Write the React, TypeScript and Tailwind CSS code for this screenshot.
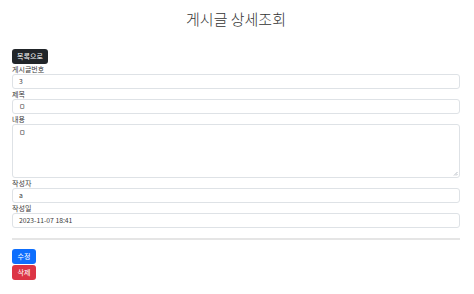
import React from 'react';

const font = { fontFamily: '"Noto Sans CJK KR", "Noto Sans", sans-serif' };

const Field: React.FC<{ label: string; value: string; area?: boolean }> = ({ label, value, area }) => (
  <div className="flex flex-col">
    <label className="h-[10px] text-[7px] leading-[10px] text-[#3a3a3a]">{label}</label>
    {area ? (
      <div className="relative h-[54px] rounded-[3px] border border-[#dee2e6] bg-white px-[6px] pt-[3px] text-[7px] leading-[9px] text-[#3a3a3a]">
        {value}
        <svg className="absolute bottom-[1px] right-[1px]" width="5" height="5" viewBox="0 0 5 5">
          <path d="M4.5 1 L1 4.5 M4.5 3 L3 4.5" stroke="#9ca3af" strokeWidth="0.7" />
        </svg>
      </div>
    ) : (
      <div className="flex h-[15px] items-center rounded-[3px] border border-[#dee2e6] bg-white px-[6px] text-[6.8px] text-[#3a3a3a]">
        {value}
      </div>
    )}
  </div>
);

export default function App() {
  return (
    <div className="h-[294px] w-[474px] overflow-hidden bg-white pl-3 pr-[14px]" style={font}>
      <h1 className="pt-[9px] text-center text-[15px] font-light leading-[20px] text-[#333]">게시글 상세조회</h1>

      <div className="mt-[20px] flex">
        <button className="flex h-[15px] w-[36px] items-center justify-center rounded-[3px] bg-[#212529] text-[7px] text-white">
          목록으로
        </button>
      </div>

      <Field label="게시글번호" value="3" />
      <Field label="제목" value="ㅁ" />
      <Field label="내용" value="ㅁ" area />
      <Field label="작성자" value="a" />
      <Field label="작성일" value="2023-11-07 18:41" />

      <div className="mt-[10px] h-[2px] bg-[#e5e5e5]" />

      <div className="mt-[9px] flex flex-col items-start gap-[1px]">
        <button className="flex h-[15px] w-[24px] items-center justify-center rounded-[3px] bg-[#0d6efd] text-[7px] text-white">
          수정
        </button>
        <button className="flex h-[15px] w-[24px] items-center justify-center rounded-[3px] bg-[#dc3545] text-[7px] text-white">
          삭제
        </button>
      </div>
    </div>
  );
}
